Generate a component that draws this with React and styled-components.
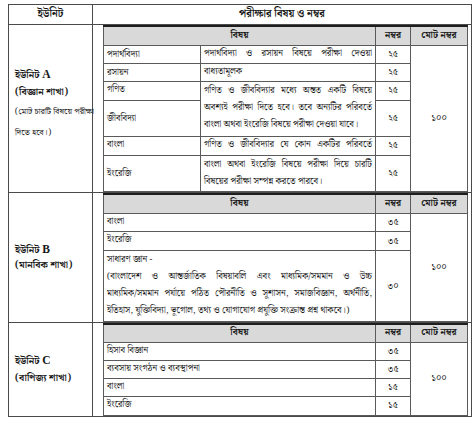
import React from 'react';
import styled, {createGlobalStyle} from "styled-components";

const GlobalStyle = createGlobalStyle`
  html, body {
    margin: 0;
    background: #ffffff;
  }
  body {
    font-family: "Noto Serif Bengali", "Noto Sans Bengali", "Lohit Bengali", "FreeSerif", "Liberation Serif", serif;
    color: #161616;
  }
`;

const Page = styled.div`
  padding: 4px 3px 0 8px;
`;

const OuterTable = styled.table`
  width: 463px;
  border-collapse: collapse;
  table-layout: fixed;
`;

const OuterHead = styled.td`
  height: 19px;
  border: 1px solid #4a4a4a;
  padding: 0;
  text-align: center;
  font-weight: bold;
  font-size: 10.3px;
  line-height: 15px;
`;

const UnitCell = styled.td`
  border: 1px solid #4a4a4a;
  padding: 0 2px ${p => p.$pb || 0}px 6px;
  vertical-align: middle;
  line-height: ${p => p.$lh || 17}px;
  white-space: nowrap;
`;

const UnitTitle = styled.div`
  font-weight: bold;
  font-size: 9.8px;

  b {
    font-family: "Liberation Serif", serif;
    font-size: 11.5px;
  }
`;

const UnitNote = styled.div`
  line-height: 21px;
  font-size: 8.6px;
`;

const NestCell = styled.td`
  border: 1px solid #4a4a4a;
  padding: 0 5px 0 10px;
  vertical-align: top;
`;

const InnerTable = styled.table`
  width: 100%;
  border-collapse: collapse;
  table-layout: fixed;
  border-top: 2px solid #1e1e1e;
  font-size: 9px;
`;

const Row = styled.tr`
  height: ${p => p.$h}px;
`;

const Th = styled.td`
  background: #d9d9d9;
  border: 1px solid #5a5a5a;
  border-top: 2px solid #1e1e1e;
  padding: 0 3px;
  font-weight: bold;
  font-size: 9.4px;
  line-height: 14px;
  text-align: center;
  vertical-align: middle;
`;

const Td = styled.td`
  border: 1px solid #5a5a5a;
  padding: 0 3px;
  text-align: ${p => p.$align || 'left'};
  vertical-align: ${p => p.$valign || 'middle'};
  line-height: ${p => p.$lh || 15}px;
  white-space: nowrap;
  overflow: hidden;
`;

const Line = styled.div`
  text-align: ${p => p.$justify ? 'justify' : 'left'};
  text-align-last: ${p => p.$justify ? 'justify' : 'auto'};
`;

const unitA = [
    {h: 18, subject: 'পদার্থবিদ্যা', desc: ['পদার্থবিদ্যা ও রসায়ন বিষয়ে পরীক্ষা দেওয়া'], just: [0]},
    {h: 18, subject: 'রসায়ন', desc: ['বাধ্যতামূলক'], just: []},
    {h: 19, subject: 'গণিত', top: true, span: 2, just: [0, 1],
        desc: ['গণিত ও জীববিদ্যার মধ্যে অন্তত একটি বিষয়ে',
            'অবশ্যই পরীক্ষা দিতে হবে। তবে অন্যটির পরিবর্তে',
            'বাংলা অথবা ইংরেজি বিষয়ে পরীক্ষা দেওয়া যাবে।']},
    {h: 36, subject: 'জীববিদ্যা', skip: true},
    {h: 19, subject: 'বাংলা', top: true, desc: ['গণিত ও জীববিদ্যার যে কোন একটির পরিবর্তে'], just: [0]},
    {h: 36, subject: 'ইংরেজি', just: [0],
        desc: ['বাংলা অথবা ইংরেজি বিষয়ে পরীক্ষা দিয়ে চারটি',
            'বিষয়ের পরীক্ষা সম্পন্ন করতে পারবে।']},
];

const unitB = [
    {h: 18, lines: ['বাংলা'], just: [], mark: '৩৫'},
    {h: 19, lines: ['ইংরেজি'], just: [], mark: '৩৫'},
    {h: 71, lh: 17, just: [1, 2], mark: '৩০',
        lines: ['সাধারণ জ্ঞান -',
            '(বাংলাদেশ ও আন্তর্জাতিক বিষয়াবলি এবং মাধ্যমিক/সমমান ও উচ্চ',
            'মাধ্যমিক/সমমান পর্যায়ে পঠিত পৌরনীতি ও সুশাসন, সমাজবিজ্ঞান, অর্থনীতি,',
            'ইতিহাস, যুক্তিবিদ্যা, ভূগোল, তথ্য ও যোগাযোগ প্রযুক্তি সংক্রান্ত প্রশ্ন থাকবে।)']},
];

const unitC = [
    {h: 18, lines: ['হিসাব বিজ্ঞান'], just: [], mark: '৩৫'},
    {h: 18, lines: ['ব্যবসায় সংগঠন ও ব্যবস্থাপনা'], just: [], mark: '৩৫'},
    {h: 18, lines: ['বাংলা'], just: [], mark: '১৫'},
    {h: 19, lines: ['ইংরেজি'], just: [], mark: '১৫'},
];

function DescLines({lines, just}) {
    return lines.map((text, i) => (
        <Line key={i} $justify={just.includes(i)}>{text}</Line>
    ));
}

function ScienceTable() {
    return (
        <InnerTable>
            <colgroup>
                <col style={{width: 97}}/>
                <col style={{width: 175}}/>
                <col style={{width: 35}}/>
                <col style={{width: 57}}/>
            </colgroup>
            <tbody>
            <Row $h={19}>
                <Th colSpan={2}>বিষয়</Th>
                <Th>নম্বর</Th>
                <Th>মোট নম্বর</Th>
            </Row>
            {unitA.map((r, i) => (
                <Row $h={r.h} key={i}>
                    <Td $valign={r.top ? 'top' : 'middle'}>{r.subject}</Td>
                    {!r.skip &&
                        <Td rowSpan={r.span || 1} $valign="top"
                            $lh={r.desc.length > 2 ? 17 : r.desc.length > 1 ? 17 : 15}>
                            <DescLines lines={r.desc} just={r.just}/>
                        </Td>}
                    <Td $align="center">২৫</Td>
                    {i === 0 && <Td rowSpan={6} $align="center">১০০</Td>}
                </Row>
            ))}
            </tbody>
        </InnerTable>
    );
}

function SimpleTable({rows, headH}) {
    return (
        <InnerTable>
            <colgroup>
                <col style={{width: 272}}/>
                <col style={{width: 35}}/>
                <col style={{width: 57}}/>
            </colgroup>
            <tbody>
            <Row $h={headH}>
                <Th>বিষয়</Th>
                <Th>নম্বর</Th>
                <Th>মোট নম্বর</Th>
            </Row>
            {rows.map((r, i) => (
                <Row $h={r.h} key={i}>
                    <Td $valign="top" $lh={r.lh || 15}>
                        <DescLines lines={r.lines} just={r.just}/>
                    </Td>
                    <Td $align="center">{r.mark}</Td>
                    {i === 0 && <Td rowSpan={rows.length} $align="center">১০০</Td>}
                </Row>
            ))}
            </tbody>
        </InnerTable>
    );
}

export default function App() {
    return (
        <>
            <GlobalStyle/>
            <Page>
                <OuterTable>
                    <colgroup>
                        <col style={{width: 84}}/>
                        <col style={{width: 379}}/>
                    </colgroup>
                    <tbody>
                    <tr>
                        <OuterHead>ইউনিট</OuterHead>
                        <OuterHead>পরীক্ষার বিষয় ও নম্বর</OuterHead>
                    </tr>
                    <tr>
                        <UnitCell $pb={8}>
                            <UnitTitle>ইউনিট <b>A</b></UnitTitle>
                            <UnitTitle>(বিজ্ঞান শাখা)</UnitTitle>
                            <UnitNote>(মোট চারটি বিষয়ে পরীক্ষা<br/>দিতে হবে।)</UnitNote>
                        </UnitCell>
                        <NestCell><ScienceTable/></NestCell>
                    </tr>
                    <tr>
                        <UnitCell $lh={15}>
                            <UnitTitle>ইউনিট <b>B</b></UnitTitle>
                            <UnitTitle>(মানবিক শাখা)</UnitTitle>
                        </UnitCell>
                        <NestCell><SimpleTable rows={unitB} headH={20}/></NestCell>
                    </tr>
                    <tr>
                        <UnitCell>
                            <UnitTitle>ইউনিট <b>C</b></UnitTitle>
                            <UnitTitle>(বাণিজ্য শাখা)</UnitTitle>
                        </UnitCell>
                        <NestCell><SimpleTable rows={unitC} headH={18}/></NestCell>
                    </tr>
                    </tbody>
                </OuterTable>
            </Page>
        </>
    );
}
